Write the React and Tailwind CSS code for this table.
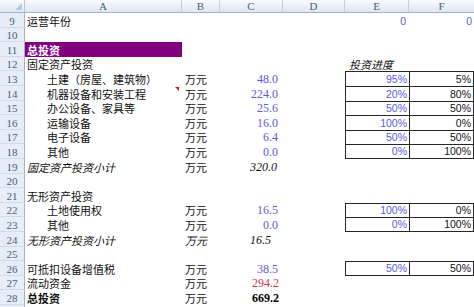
import React from 'react';

// column widths: row-number, A, B, C, D, E, F, (G sliver)
const COLS = ['w-[25px]', 'w-[157px]', 'w-[38px]', 'w-[63px]', 'w-[62px]', 'w-[64px]', 'w-[65px]'];

const cjk = "font-['Noto_Sans_CJK_SC',sans-serif]";
const serif = "font-['Liberation_Serif','Noto_Sans_CJK_SC',serif]";
const sans = "font-['Liberation_Sans',sans-serif]";

const rows = [
    { n: 9, a: '运营年份', e: '0', f: '0', zero: true },
    { n: 10 },
    { n: 11, a: '总投资', purple: true },
    { n: 12, a: '固定资产投资', label: '投资进度' },
    { n: 13, a: '土建（房屋、建筑物）', indent: true, b: '万元', c: '48.0', e: '95%', f: '5%', box: true },
    { n: 14, a: '机器设备和安装工程', indent: true, b: '万元', c: '224.0', e: '20%', f: '80%', box: true, note: true },
    { n: 15, a: '办公设备、家具等', indent: true, b: '万元', c: '25.6', e: '50%', f: '50%', box: true },
    { n: 16, a: '运输设备', indent: true, b: '万元', c: '16.0', e: '100%', f: '0%', box: true },
    { n: 17, a: '电子设备', indent: true, b: '万元', c: '6.4', e: '50%', f: '50%', box: true },
    { n: 18, a: '其他', indent: true, b: '万元', c: '0.0', e: '0%', f: '100%', box: true, last: true },
    { n: 19, a: '固定资产投资小计', italic: true, b: '万元', c: '320.0', cStyle: 'italic' },
    { n: 20 },
    { n: 21, a: '无形资产投资' },
    { n: 22, a: '土地使用权', indent: true, b: '万元', c: '16.5', e: '100%', f: '0%', box: true },
    { n: 23, a: '其他', indent: true, b: '万元', c: '0.0', e: '0%', f: '100%', box: true, last: true },
    { n: 24, a: '无形资产投资小计', italic: true, b: '万元', bItalic: true, c: '16.5', cStyle: 'italic16' },
    { n: 25 },
    { n: 26, a: '可抵扣设备增值税', b: '万元', c: '38.5', e: '50%', f: '50%', box: true, last: true },
    { n: 27, a: '流动资金', b: '万元', c: '294.2', cStyle: 'red' },
    { n: 28, a: '总投资', bold: true, b: '万元', c: '669.2', cStyle: 'bold' },
    { n: 29, hideNumber: true },
];

const cStyles = {
    italic: 'italic text-[#111] pr-[6px]',
    italic16: 'italic text-[#111] pr-[12px]',
    red: 'text-[#d0393b] pr-[4px]',
    bold: 'font-bold text-black pr-[4px]',
};

function HeaderRow() {
    const letters = ['A', 'B', 'C', 'D', 'E', 'F', ''];
    return (
        <div className="flex h-[13px] bg-gradient-to-b from-[#f9fbfd] to-[#dfe7f1] border-b border-[#9fb4cc]">
            <div className={`${COLS[0]} relative border-r border-[#b5c5d8]`}>
                <div className="absolute right-[2px] bottom-[2px] w-0 h-0 border-l-[7px] border-l-transparent border-b-[7px] border-b-[#b6c6d8]" />
            </div>
            {letters.map((l, i) => (
                <div
                    key={i}
                    className={`${COLS[i + 1]} flex items-center justify-center text-[11px] leading-none text-[#4a5f80] ${serif} ${i < 5 ? 'border-r border-[#c3d0df]' : ''}`}
                >
                    {l}
                </div>
            ))}
        </div>
    );
}

function BoxCell({ value, right, row, width }) {
    const border = row.box
        ? `border-t border-l border-[#262626] ${right ? 'border-r' : ''} ${row.last ? 'border-b' : ''}`
        : '';
    return (
        <div className={`${width} flex items-end justify-end ${border}`}>
            {value && (
                <span className={`${sans} text-[10.5px] leading-[13px] pr-[2px] ${!right || row.zero ? 'text-[#5a5ae0]' : 'text-[#111]'} ${row.zero && !right ? 'pr-[3px]' : ''}`}>
                    {value}
                </span>
            )}
        </div>
    );
}

function Row({ row }) {
    return (
        <div className="flex h-[14.6px]">
            <div className={`${COLS[0]} flex items-end justify-center bg-[#e6edf6] border-r border-[#9fb4cc] border-b border-b-[#d0dbe8] text-[11px] leading-[12px] text-[#4a5f80] ${serif}`}>
                {row.hideNumber ? '' : row.n}
            </div>
            {/* A */}
            <div className={`${COLS[1]} relative flex items-end ${row.purple ? 'bg-[#800080]' : ''}`}>
                {row.a && (
                    <span
                        className={`${cjk} text-[11px] leading-[13px] whitespace-nowrap ${row.indent ? 'pl-[22px]' : 'pl-[2px]'} ${row.purple ? 'text-white font-bold' : 'text-[#111]'} ${row.italic ? 'italic' : ''} ${row.bold ? 'font-bold' : ''}`}
                    >
                        {row.a}
                    </span>
                )}
                {row.note && (
                    <div className="absolute right-[3px] top-[1px] w-0 h-0 border-t-[4px] border-t-[#e0141e] border-l-[4px] border-l-transparent" />
                )}
            </div>
            {/* B */}
            <div className={`${COLS[2]} flex items-end`}>
                {row.b && (
                    <span className={`${cjk} text-[11px] leading-[13px] pl-[3px] text-[#111] ${row.bItalic ? 'italic' : ''}`}>{row.b}</span>
                )}
            </div>
            {/* C */}
            <div className={`${COLS[3]} flex items-end justify-end`}>
                {row.c && (
                    <span className={`${serif} text-[12px] leading-[14px] ${row.cStyle ? cStyles[row.cStyle] : 'text-[#5a5ae0] pr-[5px]'}`}>
                        {row.c}
                    </span>
                )}
            </div>
            {/* D */}
            <div className={`${COLS[4]}`} />
            {/* E / F */}
            {row.label ? (
                <div className={`${COLS[5]} flex items-end`}>
                    <span className={`${cjk} text-[11px] leading-[13px] italic pl-[4px] whitespace-nowrap text-[#111]`}>{row.label}</span>
                </div>
            ) : (
                <BoxCell value={row.e} row={row} width={COLS[5]} />
            )}
            <BoxCell value={row.f} row={row} right width={COLS[6]} />
            <div className="flex-1" />
        </div>
    );
}

export default function App() {
    return (
        <div className="w-[474px] h-[307px] overflow-hidden bg-white select-none">
            <HeaderRow />
            {rows.map(r => (
                <Row key={r.n} row={r} />
            ))}
        </div>
    );
}
